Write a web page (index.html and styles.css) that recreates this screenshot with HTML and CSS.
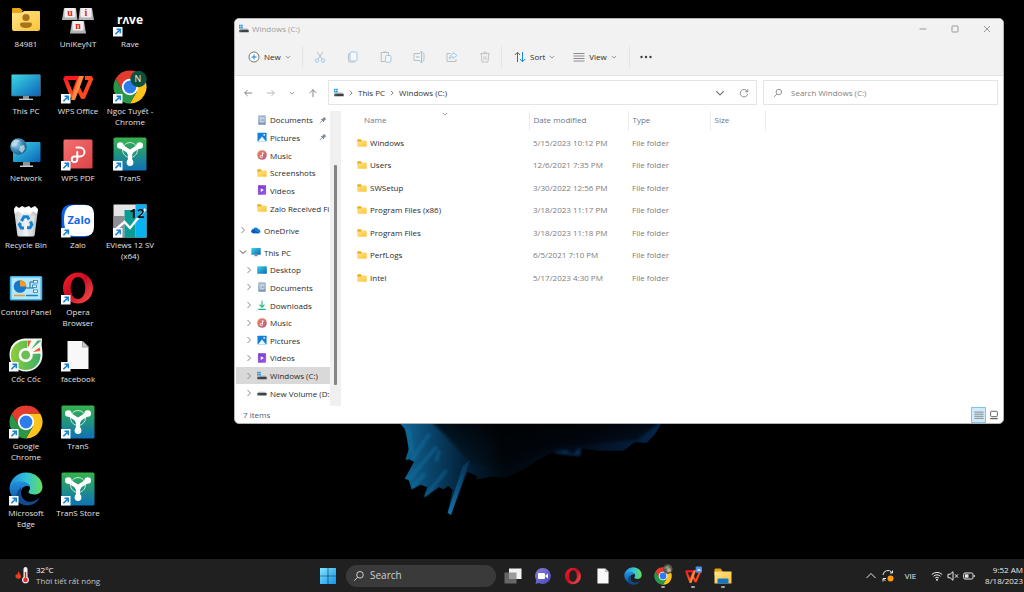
FILE: index.html
```html
<!DOCTYPE html>
<html lang="en">
<head>
<meta charset="utf-8">
<meta name="viewport" content="width=device-width, initial-scale=1">
<title>Desktop</title>
<link rel="stylesheet" href="styles.css">
</head>
<body>
<svg class="sprite" aria-hidden="true">
  <defs>
    <linearGradient id="gFolder" x1="0" y1="0" x2="1" y2="1"><stop offset="0" stop-color="#ffe38e"/><stop offset="1" stop-color="#fcc435"/></linearGradient>
    <linearGradient id="gScreen" x1="0" y1="0" x2="1" y2="1"><stop offset="0" stop-color="#3bd8e6"/><stop offset="1" stop-color="#0b62b8"/></linearGradient>
    <linearGradient id="gWps" x1="0" y1="0" x2="0" y2="1"><stop offset="0" stop-color="#fb1722"/><stop offset="1" stop-color="#ff5a1c"/></linearGradient>
    <linearGradient id="gPdf" x1="0" y1="0" x2="1" y2="1"><stop offset="0" stop-color="#f4706f"/><stop offset="1" stop-color="#dd4247"/></linearGradient>
    <linearGradient id="gTrans" x1="0" y1="0" x2="0" y2="1"><stop offset="0" stop-color="#36b34a"/><stop offset="1" stop-color="#0e71b8"/></linearGradient>
    <linearGradient id="gOpera" x1="0" y1="0" x2="1" y2="1"><stop offset="0" stop-color="#fb1f2c"/><stop offset=".45" stop-color="#c80d20"/><stop offset="1" stop-color="#ff5552"/></linearGradient>
    <linearGradient id="gEdgeA" x1="0" y1="0" x2="1" y2="0"><stop offset="0" stop-color="#1f8fdb"/><stop offset=".5" stop-color="#30c2dd"/><stop offset="1" stop-color="#66dd58"/></linearGradient>
    <linearGradient id="gEdgeB" x1="0" y1="0" x2="0" y2="1"><stop offset="0" stop-color="#2391df"/><stop offset="1" stop-color="#0c4f9c"/></linearGradient>
    <linearGradient id="gCoc" x1="0" y1="0" x2="1" y2="0"><stop offset="0" stop-color="#8fce3b"/><stop offset="1" stop-color="#3caf68"/></linearGradient>
    <linearGradient id="gMusic" x1="0" y1="0" x2="1" y2="1"><stop offset="0" stop-color="#f28a54"/><stop offset="1" stop-color="#b4578f"/></linearGradient>
    <linearGradient id="gVideo" x1="0" y1="0" x2="1" y2="1"><stop offset="0" stop-color="#6d34c5"/><stop offset="1" stop-color="#a35cf0"/></linearGradient>
    <linearGradient id="gDoc" x1="0" y1="0" x2="0" y2="1"><stop offset="0" stop-color="#a8bcd3"/><stop offset="1" stop-color="#7390b3"/></linearGradient>
    <linearGradient id="gStart" x1="0" y1="0" x2="1" y2="1"><stop offset="0" stop-color="#7ee6ff"/><stop offset="1" stop-color="#1292ec"/></linearGradient>
    <linearGradient id="gChat" x1="0" y1="0" x2="1" y2="1"><stop offset="0" stop-color="#8a7fdc"/><stop offset="1" stop-color="#4548b8"/></linearGradient>
    <linearGradient id="gBin" x1="0" y1="0" x2="1" y2="0"><stop offset="0" stop-color="#c5cbd0"/><stop offset=".5" stop-color="#f2f4f5"/><stop offset="1" stop-color="#b4babf"/></linearGradient>
    <radialGradient id="gGlobe" cx=".35" cy=".35" r=".8"><stop offset="0" stop-color="#a9d9ee"/><stop offset=".5" stop-color="#3e88b4"/><stop offset="1" stop-color="#174c72"/></radialGradient>
  </defs>

  <symbol id="shortcut" viewBox="0 0 34 34"><rect y="24" width="9.5" height="9.5" fill="#f8fbfd"/><path d="M2.4 31.2 7 26.6M3.5 26.3h3.8v3.9" fill="none" stroke="#1b80cf" stroke-width="1.5"/></symbol>

  <symbol id="user-folder" viewBox="0 0 34 34"><path d="M3 6q0-1 1-1h7l3 3h-1v5H3z" fill="#e8a513"/><path d="M3 10h9l3-2h15q1 0 1 1v17q0 2-2 2H5q-2 0-2-2z" fill="url(#gFolder)"/><circle cx="17" cy="14.5" r="3.6" fill="#a8741a"/><path d="M11 21q0-1.500 2-1.500h8q2 0 2 1.500 0 4-6 4t-6-4z" fill="#a8741a"/></symbol>

  <symbol id="unikey" viewBox="0 0 34 34"><g fill="#b3b3b3"><path d="M3 5h12l1.500 12H1z"/><path d="M19 5h12l2 12H17.500z"/><path d="M11 18h12l2 12.500H9z"/></g><g fill="#f0f0f0"><rect x="3.500" y="5" width="11" height="9.500" rx="1.500"/><rect x="19.500" y="5" width="11" height="9.500" rx="1.500"/><rect x="11.500" y="18" width="11" height="9.500" rx="1.500"/></g></symbol>

  <symbol id="this-pc" viewBox="0 0 34 34"><rect x="2.500" y="4.500" width="29" height="21.500" rx="1" fill="url(#gScreen)" stroke="#555f66" stroke-width=".7"/><path d="M14 26h6v3h-6z" fill="#8a949c"/><path d="M10 28.700h14v1.300H10z" fill="#c3cad0"/></symbol>

  <symbol id="network" viewBox="0 0 34 34"><rect x="4" y="5" width="27.500" height="20" rx="1" fill="url(#gScreen)"/><path d="M14 25h7v4h-7z" fill="#8a949c"/><path d="M11 28.500h13V30H11z" fill="#c3cad0"/><circle cx="9.500" cy="9.500" r="8.300" fill="url(#gGlobe)"/><path d="M5 3q4-1 6 1l-3 2-1 3-4 1-1-3zM11 9l4-1 1 4-3 4-3-3z" fill="#c5e3ee" opacity=".75"/></symbol>

  <symbol id="wps" viewBox="0 0 34 34"><path d="M4 8h14L11.500 27z" fill="none" stroke="url(#gWps)" stroke-width="4" stroke-linejoin="bevel"/><path d="M16 16 22 28 30.500 8H24" fill="none" stroke="#ff471b" stroke-width="4" stroke-linejoin="bevel"/><path d="M18 6h5L14 30h-4z" fill="#ff8a3d"/></symbol>

  <symbol id="wps-pdf" viewBox="0 0 34 34"><rect x="2.500" y="2.500" width="29" height="29" rx="1.500" fill="url(#gPdf)"/><path d="M15.500 10.500h3.500a4.500 4.500 0 0 1 0 9h-5.500a2.800 2.800 0 1 0 2.800 2.800V15" fill="none" stroke="#fff" stroke-width="1.900" stroke-linecap="round"/></symbol>

  <symbol id="chrome" viewBox="0 0 34 34"><path d="M17 .5A16.500 16.500 0 0 0 2.700 8.700L10 21.200 17 8.800h14.300A16.500 16.500 0 0 0 17 .5z" fill="#e33b2e"/><path d="M31.300 8.800H17l7 12.400-7.100 12.300A16.500 16.500 0 0 0 31.300 8.800z" fill="#fdc31b"/><path d="M2.700 8.700a16.500 16.500 0 0 0 14.200 24.800L24 21.200H10z" fill="#2a9748"/><circle cx="17" cy="17" r="8.200" fill="#fff"/><circle cx="17" cy="17" r="6.400" fill="#2e7cec"/></symbol>

  <symbol id="trans" viewBox="0 0 34 34"><rect x=".5" y=".5" width="33" height="33" rx="1.500" fill="url(#gTrans)"/><circle cx="17" cy="13" r="7.500" fill="none" stroke="#d3ecdc" stroke-width=".9"/><path d="M7.500 9 17 15l9.500-6M17 14v11" fill="none" stroke="#fff" stroke-width="4.200"/><path d="m11 10 6 12 6-12-6 4z" fill="#fff"/><g fill="#fff"><circle cx="7.300" cy="8.500" r="3.300"/><circle cx="26.700" cy="8.500" r="3.300"/><circle cx="17" cy="25.500" r="3.400"/></g></symbol>

  <symbol id="bin" viewBox="0 0 34 34"><path d="M5 5h24l-3.300 26q-.2 1.500-2 1.500H10.300q-1.800 0-2-1.500z" fill="url(#gBin)"/><path d="M5 5 7 2l3 2 3-2 3 1.500L20 2l2 2 4-2 3 3-1 5-4-3-3 3-4-2-4 2-4-3-3 3z" fill="#fff"/><path d="m8 11 5 4-3 4zm18 0-6 3 5 4zM9 23l5 5-4 2zm15-1-5 6 4 2z" fill="#dce1e4"/><g fill="none" stroke="#1583d3" stroke-width="3"><path d="M12.500 17 15 12.800h3.500l1.500 2.700"/><path d="m21.500 17.500 1.300 3.200-1.800 3h-3"/><path d="M15 24h-2.800l-1.800-3.300 1.300-1.700"/></g></symbol>

  <symbol id="zalo" viewBox="0 0 34 34"><rect x=".5" y=".5" width="32" height="32.500" rx="9" fill="#0a62f0"/><path d="M14 1h10q9 0 9 9v13q0 9-9 9H13q-4 0-6-2Q3 25 3 16 3 1 14 1z" fill="#fff"/></symbol>

  <symbol id="eviews" viewBox="0 0 34 34"><rect x=".5" y=".5" width="33" height="33" fill="#e6e6e6"/><path d="M.5 12h11v21.500H.5z" fill="#8f8e94"/><path d="M11.500 6h11v27.500h-11z" fill="#0b9c98"/><path d="M22.500.5h11v33h-11z" fill="#08b1ef"/><path d="m1 27 10.500-9 5.500 6L32.500 5" fill="none" stroke="#fff" stroke-width="2.400"/></symbol>

  <symbol id="control" viewBox="0 0 34 34"><rect x=".8" y="5" width="32.500" height="24.500" rx="1.500" fill="#3fb2e8"/><rect x="2.500" y="6.500" width="29" height="21.500" fill="#b5e6fa"/><circle cx="11" cy="15.500" r="6.300" fill="#1577c9"/><path d="M11 9.200a6.300 6.300 0 0 1 6.300 6.300H11z" fill="#f79b1e"/><path d="M17 17h4v-6h4M21 17h4" fill="none" stroke="#27698f"/><g fill="#fff" stroke="#1b81be" stroke-width=".8"><rect x="24.500" y="9.500" width="4" height="2.500"/><rect x="23.500" y="14" width="4" height="2.500"/><rect x="24.500" y="19" width="4" height="2.500"/></g><path d="M5 24.500h11" stroke="#e39b2a" stroke-width="1.500"/><path d="M17 24.500h12" stroke="#1b81be" stroke-width="1.500"/></symbol>

  <symbol id="opera" viewBox="0 0 34 34"><path fill-rule="evenodd" d="M17 1.500c8.500 0 15 7 15 15.500s-6.500 15.500-15 15.500S2 25.500 2 17 8.500 1.500 17 1.500zm0 4.500c-4.500 0-7.300 5-7.300 11s2.800 11 7.300 11 7.300-5 7.300-11S21.500 6 17 6z" fill="url(#gOpera)"/></symbol>

  <symbol id="coccoc" viewBox="0 0 34 34"><path d="M15 .5h18q-1 5-.5 7 1 4 1 9.500c0 9-7.500 16.500-16.500 16.500S.5 26 .5 17 6 1.500 15 .5z" fill="#f5faf2"/><circle cx="16.700" cy="17.300" r="14.800" fill="url(#gCoc)"/><path d="M18 12 19 1h14q-1 5-.5 14.500L22 16z" fill="#f5faf2"/><path d="m19 9.500 0-7 3.300.3z" fill="#ef5b34"/><path d="m22 11.500 6.500-9h4z" fill="#43ae5f"/><path d="m24 14 6.500-4.500 1 3.500z" fill="#ef5b34"/><circle cx="16.700" cy="17" r="5.800" fill="#6dbf55" stroke="#fff" stroke-width="2.600"/></symbol>

  <symbol id="page" viewBox="0 0 34 34"><path d="M6.500 3h15l6 6v22h-21z" fill="#f8f8f8"/><path d="M21.500 3v6h6z" fill="#cfcfcf" stroke="#777" stroke-width=".6"/></symbol>

  <symbol id="edge" viewBox="0 0 34 34"><path d="M.6 17A16.500 16.500 0 0 1 17 .5c10 0 16.500 7 16.500 14.500 0 5-4 7.500-8 7.500-4 0-6-1.200-6-2.500 0-1 1.500-1.500 1.500-4 0-3-3-5.500-7-5.500C7 10.500 2 13 .6 17z" fill="url(#gEdgeA)"/><path d="M.5 17c.5-5 6-8.500 12-7.500 5 .8 7.500 3 8 5-4-2-9 1-8.500 7 .5 6 6 10 12 9A16.500 16.500 0 0 1 .5 17z" fill="url(#gEdgeB)"/><path d="M12 20c-1 6 4 11 11 9.500 4-.7 6-2.500 8-4.500-2 5-7.500 8.500-13.500 8.500C10 33 7 28 7.500 23q.5-5 5.500-8-1 2-1 5z" fill="#114a8b"/></symbol>

  <symbol id="folder" viewBox="0 0 16 16"><path d="M.5 3q0-1 1-1h4.300L7.500 4v4h-7z" fill="#eba91a"/><path d="M.5 5.500h5.800L8 4h6.500q1 0 1 1v8q0 1-1 1h-13q-1 0-1-1z" fill="url(#gFolder)"/></symbol>
  <symbol id="document" viewBox="0 0 16 16"><rect x="2" y=".5" width="12" height="15" rx="1" fill="url(#gDoc)"/><path d="M4 5h8M4 8h4M4 11h8M10 8h2" stroke="#fff" stroke-width="1.300"/></symbol>
  <symbol id="picture" viewBox="0 0 16 16"><rect x=".8" y="1" width="14.500" height="14" rx="1" fill="#1381d8"/><path d="m1.500 15 6.500-8 6.500 8z" fill="#eef8ff"/><circle cx="11.500" cy="4.500" r="1.400" fill="#fff"/></symbol>
  <symbol id="music" viewBox="0 0 16 16"><circle cx="8" cy="8" r="7.700" fill="url(#gMusic)"/><circle cx="7" cy="10.300" r="1.800" fill="none" stroke="#fff" stroke-width="1.300"/><path d="M8.800 10V4l2.200 1.500" fill="none" stroke="#fff" stroke-width="1.300"/></symbol>
  <symbol id="video" viewBox="0 0 16 16"><rect x="1.500" y=".5" width="13" height="15" rx="1" fill="url(#gVideo)"/><path d="m6 5 5 3-5 3z" fill="#fff"/><path d="M3 2v12" stroke="#c9a6f5" stroke-dasharray="1.500 1.500"/></symbol>
  <symbol id="cloud" viewBox="0 0 16 16"><path d="M3.500 13a3.500 3.500 0 0 1 0-6.800A5 5 0 0 1 12 6.800 3.200 3.200 0 0 1 13 13z" fill="#1080d8"/><path d="M0 10q2-3.500 5-3l8 6H3.500Q1 13 0 10z" fill="#0a5bb5"/></symbol>
  <symbol id="mini-pc" viewBox="0 0 16 16"><rect x=".5" y="1.500" width="15" height="11" rx=".8" fill="url(#gScreen)"/><path d="M5 14h6" stroke="#69747c" stroke-width="1.300"/><path d="M7 12h2v2H7z" fill="#69747c"/></symbol>
  <symbol id="desktop-icon" viewBox="0 0 16 16"><rect x=".3" y="2" width="15.400" height="12" rx="1" fill="url(#gScreen)"/></symbol>
  <symbol id="download" viewBox="0 0 16 16"><path d="M8 1v10M4 7.500l4 4 4-4M2 15h12" fill="none" stroke="#1fae8d" stroke-width="1.700"/></symbol>
  <symbol id="drive" viewBox="0 0 16 16"><path d="M2.500 6h11l1.500 2H1z" fill="#b5b9bb"/><rect x=".5" y="8" width="15" height="4" rx=".7" fill="#3c4246"/><path d="M2 10h2" stroke="#68b65a"/></symbol>
  <symbol id="drive-c" viewBox="0 0 16 16"><path d="M2.500 7h11L15 9H1z" fill="#b5b9bb"/><rect x=".5" y="9" width="15" height="4.300" rx=".7" fill="#3c4246"/><path d="M2 11h2" stroke="#68b65a"/><path d="M0 1h2.700v2.700H0zm3.300 0H6v2.700H3.300zM0 4.300h2.700V7H0zm3.300 0H6V7H3.300z" fill="#2097e4"/></symbol>

  <symbol id="right" viewBox="0 0 8 8"><path d="m2.500 1 3 3-3 3" class="line"/></symbol>
  <symbol id="down" viewBox="0 0 8 8"><path d="m1 2.500 3 3 3-3" class="line"/></symbol>
  <symbol id="up" viewBox="0 0 12 12"><path d="m1.500 8 4.500-4.500L10.500 8" class="line"/></symbol>
  <symbol id="arrow-left" viewBox="0 0 12 12"><path d="M11 6H2m3.500-3.500L2 6l3.500 3.500" class="line"/></symbol>
  <symbol id="arrow-right" viewBox="0 0 12 12"><path d="M1 6h9M6.500 2.500 10 6 6.500 9.500" class="line"/></symbol>
  <symbol id="arrow-up" viewBox="0 0 12 12"><path d="M6 11V2M2 6l4-4 4 4" class="line"/></symbol>
  <symbol id="refresh" viewBox="0 0 12 12"><path d="M10.200 4.500A4.500 4.500 0 1 0 10.500 7M10.500 1.500v3h-3" class="line"/></symbol>
  <symbol id="search" viewBox="0 0 12 12"><circle cx="7" cy="4.800" r="3.300" class="line"/><path d="M4.600 7.300 1.300 10.700" class="line"/></symbol>
  <symbol id="pin" viewBox="0 0 10 10"><path d="m6 .8 3.200 3.200-1 .3-1.800 1.900-.3 2L2 4.200l2-.3L5.800 2z" fill="#7f8b97"/><path d="M4 6 1 9" stroke="#7f8b97"/></symbol>

  <symbol id="new" viewBox="0 0 12 12"><circle cx="6" cy="6" r="5" fill="#fff" stroke="#656565" stroke-width=".9"/><path d="M6 3.500v5M3.500 6h5" stroke="#1780d2"/></symbol>
  <symbol id="cut" viewBox="0 0 12 12"><path d="M3 .8 8 8M9 .8 4 8" fill="none" stroke="#b8b8b8" stroke-width=".9"/><g fill="none" stroke="#9cc9ea"><circle cx="3" cy="9.500" r="1.700"/><circle cx="9" cy="9.500" r="1.700"/></g></symbol>
  <symbol id="copy" viewBox="0 0 12 12"><path d="M3 3H1.500v6.500q0 1.500 1.500 1.500h5" fill="none" stroke="#bdbdbd"/><rect x="3" y="1" width="7" height="9" rx="1.200" fill="#f7f7f7" stroke="#9ccbed"/></symbol>
  <symbol id="paste" viewBox="0 0 12 12"><path d="M5 10.500H1.200v-9H8.500V4M3.500 1h3" fill="none" stroke="#bdbdbd"/><rect x="5.500" y="4.500" width="5.500" height="6.700" rx="1" fill="#f7f7f7" stroke="#9ccbed"/></symbol>
  <symbol id="rename" viewBox="0 0 12 12"><path d="M7 2.500H1v7h6M10 2.500h1v7h-1" fill="none" stroke="#bdbdbd"/><path d="M3 6h3.500M8.500 1v10M7 1h3M7 11h3" fill="none" stroke="#8bc2ea"/></symbol>
  <symbol id="share" viewBox="0 0 12 12"><path d="M4.500 2.500H1v8h9V8" fill="none" stroke="#bdbdbd"/><path d="M7 1.500 11 4.500 7 7.300V5.700Q4.700 5.500 3.500 8q0-4.500 3.500-5z" fill="#eef6fc" stroke="#8bc2ea" stroke-width=".8"/></symbol>
  <symbol id="trash" viewBox="0 0 12 12"><path d="M1 2.700h10M4.200 2.500Q4.500 1 6 1t1.800 1.500M2.300 3l.7 8h6l.7-8M5 5.300v3.500M7 5.300v3.500" fill="none" stroke="#bdbdbd" stroke-width=".9"/></symbol>
  <symbol id="sort" viewBox="0 0 12 12"><path d="M3.500 11V1.500M.8 4 3.500 1.300 6 4" fill="none" stroke="#606060"/><path d="M8.500 1v9.500M6 8l2.500 2.700L11.200 8" fill="none" stroke="#1a84d6"/></symbol>
  <symbol id="lines" viewBox="0 0 12 12"><path d="M.5 2.500h11M.5 5h11M.5 7.500h11M.5 10h11" fill="none" stroke="#8b8b8b" stroke-width="1.200"/></symbol>
  <symbol id="more" viewBox="0 0 12 12"><g fill="#3d3d3d"><circle cx="1.500" cy="6" r="1.200"/><circle cx="6" cy="6" r="1.200"/><circle cx="10.500" cy="6" r="1.200"/></g></symbol>
  <symbol id="minimize" viewBox="0 0 8 8"><path d="M.5 4h7" class="line"/></symbol>
  <symbol id="maximize" viewBox="0 0 8 8"><rect x="1" y="1" width="6" height="6" rx=".5" class="line"/></symbol>
  <symbol id="close" viewBox="0 0 8 8"><path d="m1 1 6 6M7 1 1 7" class="line"/></symbol>
  <symbol id="thumbs" viewBox="0 0 12 12"><rect x="2" y="1.500" width="8" height="6.500" rx="1" fill="none" stroke="#646464" stroke-width="1.200"/><path d="M1.500 10.200h9" stroke="#646464" stroke-width="1.500"/></symbol>

  <symbol id="weather" viewBox="0 0 16 18"><path d="M9.500 3a2 2 0 0 1 4 0v8a3.500 3.500 0 1 1-4 0z" fill="#f1f1f1"/><path d="M11.500 6v8" stroke="#e02b2b" stroke-width="1.500"/><circle cx="11.500" cy="14" r="2.300" fill="#e02b2b"/><path d="M4.500 5q.5 2 2 3.500 1.300 2-.5 4-3.500 1-4.500-1.500Q1 9 2.500 8q.3 1 1 1Q3.500 7 4.500 5z" fill="#e8401c"/></symbol>
  <symbol id="start" viewBox="0 0 16 16"><path d="M0 0h7.700v7.700H0zm8.300 0H16v7.700H8.300zM0 8.300h7.700V16H0zm8.300 0H16V16H8.300z" fill="url(#gStart)"/></symbol>
  <symbol id="taskview" viewBox="0 0 18 18"><rect x="5" y="1.500" width="12.500" height="10.500" fill="#f2f2f2"/><rect x=".5" y="5.500" width="12" height="11" fill="#7e7e7e" opacity=".75"/></symbol>
  <symbol id="chat" viewBox="0 0 18 18"><path d="M9 1a8 8 0 1 1-4 15l-3.500 1 .8-3.700A8 8 0 0 1 9 1z" fill="url(#gChat)"/><rect x="4" y="6" width="7" height="6" rx="1" fill="#fff"/><path d="m11.500 8.500 2.500-2v5l-2.500-2z" fill="#fff"/></symbol>
  <symbol id="photo-badge" viewBox="0 0 34 34"><circle cx="26" cy="4" r="9" fill="#57594a"/><circle cx="28" cy="6" r="4" fill="#b9a68d"/><path d="M19 3q4-7 11-4l-3 5z" fill="#8b937e"/></symbol>
  <symbol id="cloud-badge" viewBox="0 0 34 34"><rect x="22" y="-1" width="12" height="12" rx="2" fill="#4a8fe9"/><path d="M24 7h8l-2-3h-3z" fill="#e1efff"/></symbol>
  <symbol id="explorer" viewBox="0 0 18 18"><path d="M.5 2.500q0-1 1-1h5L8.500 4v4h-8z" fill="#e3a113"/><path d="M.5 4.500h17v12H.5z" fill="url(#gFolder)"/><path d="M3.500 12.500q0-1 1-1h9q1 0 1 1v4h-11z" fill="#1376c6"/></symbol>
  <symbol id="sync" viewBox="0 0 12 12"><path d="M1 5a5 5 0 0 1 9-2.500M10.500.5V3H8M1 11.500V8.500h3M1.500 9l2 2" class="line"/><circle cx="8.500" cy="8.500" r="3" fill="#ff9b0b"/></symbol>
  <symbol id="wifi" viewBox="0 0 12 12"><path d="M.8 4.500a7.500 7.500 0 0 1 10.400 0M2.500 6.300a5 5 0 0 1 7 0M4.200 8a2.600 2.600 0 0 1 3.600 0" class="line"/><circle cx="6" cy="9.700" r="1" fill="currentColor"/></symbol>
  <symbol id="mute" viewBox="0 0 12 12"><path d="M1 4.300h2L6 1.700v8.600L3 7.700H1zM8 4.300l3 3.400M11 4.300 8 7.700" class="line"/></symbol>
  <symbol id="battery" viewBox="0 0 12 12"><rect x=".7" y="3" width="9.300" height="6" rx="1.200" class="line"/><path d="M2 4.300h3.500v3.400H2z" fill="currentColor"/><path d="M11.300 5v2" class="line"/></symbol>
</svg>

<main class="desktop">
  <svg class="wallpaper" viewBox="0 0 900 360" aria-hidden="true">
    <defs>
      <linearGradient id="petal" x1="50" y1="0" x2="850" y2="0" gradientUnits="userSpaceOnUse"><stop offset="0" stop-color="#126e9f"/><stop offset=".12" stop-color="#0a466d"/><stop offset=".25" stop-color="#03223a"/><stop offset=".4" stop-color="#01080f"/><stop offset=".7" stop-color="#020c1b"/><stop offset="1" stop-color="#06264d"/></linearGradient>
      <linearGradient id="shade" x1="0" y1="40" x2="0" y2="210" gradientUnits="userSpaceOnUse"><stop offset="0" stop-color="#000" stop-opacity=".75"/><stop offset="1" stop-color="#000" stop-opacity="0"/></linearGradient>
      <linearGradient id="spike" x1="260" y1="150" x2="205" y2="315" gradientUnits="userSpaceOnUse"><stop offset="0" stop-color="#05304f"/><stop offset="1" stop-color="#1273a8"/></linearGradient>
      <filter id="soft"><feGaussianBlur stdDeviation="4"/></filter>
    </defs>
    <path d="M50 30 850 30 825 72 800 99 765 96 730 122 660 122 608 116 602 140 550 136 512 128 440 172 380 204 340 200 292 208 288 196 262 186 213 315 203 308 218 240 205 228 190 238 178 232 132 262 142 232 122 224 95 238 86 210 74 206 102 156 88 148 76 150 86 118 80 80 74 56z" fill="url(#petal)"/>
    <path d="M150 30H850L770 90 530 110 370 180 270 160 200 80z" fill="url(#shade)" filter="url(#soft)"/>
    <path d="m270 150-57 165-10-7 45-140z" fill="url(#spike)"/>
    <g fill="none" stroke="#1479ab" stroke-width="8" opacity=".55" filter="url(#soft)"><path d="M85 210 170 110M135 260 200 180M95 150 150 70M95 235 135 190"/><path d="M168 155 178 122M86 55 96 130"/></g>
    <path d="m520 128 35-8 25 12 20-20v25z" fill="#0c467b" opacity=".6" filter="url(#soft)"/>
  </svg>

  <ul class="shortcuts">
    <li><button class="shortcut"><svg><use href="#user-folder"/></svg><span>84981</span></button></li>
    <li><button class="shortcut"><svg><use href="#this-pc"/></svg><span>This PC</span></button></li>
    <li><button class="shortcut"><svg><use href="#network"/></svg><span>Network</span></button></li>
    <li><button class="shortcut"><svg><use href="#bin"/></svg><span>Recycle Bin</span></button></li>
    <li><button class="shortcut"><svg><use href="#control"/></svg><span>Control Panel</span></button></li>
    <li><button class="shortcut"><svg><use href="#coccoc"/><use href="#shortcut"/></svg><span>Cốc Cốc</span></button></li>
    <li><button class="shortcut"><svg><use href="#chrome"/><use href="#shortcut"/></svg><span>Google<br>Chrome</span></button></li>
    <li><button class="shortcut"><svg><use href="#edge"/><use href="#shortcut"/></svg><span>Microsoft<br>Edge</span></button></li>
    <li><button class="shortcut"><svg><use href="#unikey"/><g class="key-letter"><text x="9" y="13">u</text><text x="25" y="13">i</text><text x="17" y="26">n</text></g></svg><span>UniKeyNT</span></button></li>
    <li><button class="shortcut"><svg><use href="#wps"/><use href="#shortcut"/></svg><span>WPS Office</span></button></li>
    <li><button class="shortcut"><svg><use href="#wps-pdf"/><use href="#shortcut"/></svg><span>WPS PDF</span></button></li>
    <li><button class="shortcut"><svg><use href="#zalo"/><use href="#shortcut"/><text class="zalo-word" x="18" y="20">Zalo</text></svg><span>Zalo</span></button></li>
    <li><button class="shortcut"><svg><use href="#opera"/><use href="#shortcut"/></svg><span>Opera<br>Browser</span></button></li>
    <li><button class="shortcut"><svg><use href="#page"/><use href="#shortcut"/></svg><span>facebook</span></button></li>
    <li><button class="shortcut"><svg><use href="#trans"/><use href="#shortcut"/></svg><span>TranS</span></button></li>
    <li><button class="shortcut"><svg><use href="#trans"/><use href="#shortcut"/></svg><span>TranS Store</span></button></li>
    <li><button class="shortcut"><svg><use href="#shortcut"/><text class="rave-word" x="17" y="21">rʌve</text></svg><span>Rave</span></button></li>
    <li><button class="shortcut"><svg><use href="#chrome"/><use href="#shortcut"/><circle cx="25.500" cy="9" r="8.200" fill="#0b5040"/><text class="profile-letter" x="25" y="12">N</text></svg><span>Ngọc Tuyết -<br>Chrome</span></button></li>
    <li><button class="shortcut"><svg><use href="#trans"/><use href="#shortcut"/></svg><span>TranS</span></button></li>
    <li><button class="shortcut"><svg><use href="#eviews"/><use href="#shortcut"/><text class="eviews-number" x="24" y="14">12</text></svg><span>EViews 12 SV<br>(x64)</span></button></li>
  </ul>

  <section class="window" aria-label="Windows (C:)">
    <header class="titlebar">
      <svg class="icon"><use href="#drive-c"/></svg>
      <h1 class="window-title">Windows (C:)</h1>
      <div class="window-controls">
        <button aria-label="Minimize"><svg><use href="#minimize"/></svg></button>
        <button aria-label="Maximize"><svg><use href="#maximize"/></svg></button>
        <button aria-label="Close"><svg><use href="#close"/></svg></button>
      </div>
    </header>

    <div class="toolbar">
      <button class="menu-button new-button"><svg class="tool-icon"><use href="#new"/></svg>New<svg class="caret"><use href="#down"/></svg></button>
      <div class="tool-group">
        <button class="tool" aria-label="Cut"><svg class="tool-icon"><use href="#cut"/></svg></button>
        <button class="tool" aria-label="Copy"><svg class="tool-icon"><use href="#copy"/></svg></button>
        <button class="tool" aria-label="Paste"><svg class="tool-icon"><use href="#paste"/></svg></button>
        <button class="tool" aria-label="Rename"><svg class="tool-icon"><use href="#rename"/></svg></button>
        <button class="tool" aria-label="Share"><svg class="tool-icon"><use href="#share"/></svg></button>
        <button class="tool" aria-label="Delete"><svg class="tool-icon"><use href="#trash"/></svg></button>
      </div>
      <div class="menu-group">
        <button class="menu-button"><svg class="tool-icon"><use href="#sort"/></svg>Sort<svg class="caret"><use href="#down"/></svg></button>
        <button class="menu-button"><svg class="tool-icon"><use href="#lines"/></svg>View<svg class="caret"><use href="#down"/></svg></button>
      </div>
      <button class="tool" aria-label="See more"><svg class="tool-icon"><use href="#more"/></svg></button>
    </div>

    <div class="navigation">
      <div class="history">
        <button aria-label="Back"><svg class="nav-icon"><use href="#arrow-left"/></svg></button>
        <button class="faint" aria-label="Forward"><svg class="nav-icon"><use href="#arrow-right"/></svg></button>
        <button aria-label="Recent locations"><svg class="caret"><use href="#down"/></svg></button>
        <button aria-label="Up"><svg class="nav-icon"><use href="#arrow-up"/></svg></button>
      </div>
      <div class="address">
        <svg class="icon"><use href="#drive-c"/></svg>
        <svg class="crumb-arrow"><use href="#right"/></svg>
        <a href="#pc">This PC</a>
        <svg class="crumb-arrow"><use href="#right"/></svg>
        <a href="#c">Windows (C:)</a>
        <span class="address-actions">
          <button aria-label="Previous locations"><svg class="nav-icon"><use href="#down"/></svg></button>
          <button aria-label="Refresh"><svg class="nav-icon"><use href="#refresh"/></svg></button>
        </span>
      </div>
      <label class="search-files"><svg class="nav-icon"><use href="#search"/></svg><input type="text" placeholder="Search Windows (C:)" aria-label="Search Windows (C:)"></label>
    </div>

    <div class="panes">
      <nav class="tree">
        <ul class="branch quick">
          <li><a href="#d"><svg class="icon"><use href="#document"/></svg>Documents<svg class="pin"><use href="#pin"/></svg></a></li>
          <li><a href="#p"><svg class="icon"><use href="#picture"/></svg>Pictures<svg class="pin"><use href="#pin"/></svg></a></li>
          <li><a href="#m"><svg class="icon"><use href="#music"/></svg>Music</a></li>
          <li><a href="#s"><svg class="icon"><use href="#folder"/></svg>Screenshots</a></li>
          <li><a href="#v"><svg class="icon"><use href="#video"/></svg>Videos</a></li>
          <li><a href="#z"><svg class="icon"><use href="#folder"/></svg>Zalo Received Fi</a></li>
        </ul>
        <a class="root" href="#o"><svg class="twist"><use href="#right"/></svg><svg class="icon"><use href="#cloud"/></svg>OneDrive</a>
        <a class="root" href="#pc"><svg class="twist open"><use href="#down"/></svg><svg class="icon"><use href="#mini-pc"/></svg>This PC</a>
        <ul class="branch volumes">
          <li><a href="#dt"><svg class="twist"><use href="#right"/></svg><svg class="icon"><use href="#desktop-icon"/></svg>Desktop</a></li>
          <li><a href="#d"><svg class="twist"><use href="#right"/></svg><svg class="icon"><use href="#document"/></svg>Documents</a></li>
          <li><a href="#dl"><svg class="twist"><use href="#right"/></svg><svg class="icon"><use href="#download"/></svg>Downloads</a></li>
          <li><a href="#m"><svg class="twist"><use href="#right"/></svg><svg class="icon"><use href="#music"/></svg>Music</a></li>
          <li><a href="#p"><svg class="twist"><use href="#right"/></svg><svg class="icon"><use href="#picture"/></svg>Pictures</a></li>
          <li><a href="#v"><svg class="twist"><use href="#right"/></svg><svg class="icon"><use href="#video"/></svg>Videos</a></li>
          <li><a class="selected" href="#c"><svg class="twist"><use href="#right"/></svg><svg class="icon"><use href="#drive-c"/></svg>Windows (C:)</a></li>
          <li><a href="#n"><svg class="twist"><use href="#right"/></svg><svg class="icon"><use href="#drive"/></svg>New Volume (D:</a></li>
        </ul>
      </nav>
      <div class="scrollbar"><span class="thumb"></span></div>
      <div class="files">
        <table>
          <colgroup><col class="col-name"><col class="col-date"><col class="col-type"><col class="col-size"><col></colgroup>
          <thead><tr><th scope="col" class="sorted">Name<svg class="caret"><use href="#down"/></svg></th><th scope="col">Date modified</th><th scope="col">Type</th><th scope="col">Size</th><td></td></tr></thead>
          <tbody>
            <tr><td><svg class="icon"><use href="#folder"/></svg>Windows</td><td>5/15/2023 10:12 PM</td><td>File folder</td><td></td><td></td></tr>
            <tr><td><svg class="icon"><use href="#folder"/></svg>Users</td><td>12/6/2021 7:35 PM</td><td>File folder</td><td></td><td></td></tr>
            <tr><td><svg class="icon"><use href="#folder"/></svg>SWSetup</td><td>3/30/2022 12:56 PM</td><td>File folder</td><td></td><td></td></tr>
            <tr><td><svg class="icon"><use href="#folder"/></svg>Program Files (x86)</td><td>3/18/2023 11:17 PM</td><td>File folder</td><td></td><td></td></tr>
            <tr><td><svg class="icon"><use href="#folder"/></svg>Program Files</td><td>3/18/2023 11:18 PM</td><td>File folder</td><td></td><td></td></tr>
            <tr><td><svg class="icon"><use href="#folder"/></svg>PerfLogs</td><td>6/5/2021 7:10 PM</td><td>File folder</td><td></td><td></td></tr>
            <tr><td><svg class="icon"><use href="#folder"/></svg>Intel</td><td>5/17/2023 4:30 PM</td><td>File folder</td><td></td><td></td></tr>
          </tbody>
        </table>
      </div>
    </div>

    <footer class="status">
      <span>7 items</span>
      <div class="view-switch">
        <button class="active" aria-label="Details view"><svg class="nav-icon"><use href="#lines"/></svg></button>
        <button aria-label="Thumbnail view"><svg class="nav-icon"><use href="#thumbs"/></svg></button>
      </div>
    </footer>
  </section>
</main>

<footer class="taskbar">
  <button class="weather"><svg><use href="#weather"/></svg><span><span class="temperature">32°C</span><br>Thời tiết rất nóng</span></button>
  <div class="launcher">
    <button class="start" aria-label="Start"><svg><use href="#start"/></svg></button>
    <label class="taskbar-search"><svg class="search-icon"><use href="#search"/></svg><input type="text" placeholder="Search" aria-label="Search"></label>
    <div class="apps">
      <button aria-label="Task view"><svg><use href="#taskview"/></svg></button>
      <button aria-label="Chat"><svg><use href="#chat"/></svg></button>
      <button aria-label="Opera"><svg><use href="#opera"/></svg></button>
      <button aria-label="Document"><svg><use href="#page"/></svg></button>
      <button aria-label="Edge"><svg><use href="#edge"/></svg></button>
      <button class="running" aria-label="Chrome"><svg><use href="#chrome"/><use class="badge" href="#photo-badge"/></svg></button>
      <button class="running" aria-label="WPS"><svg><use href="#wps"/><use class="badge" href="#cloud-badge"/></svg></button>
      <button class="running" aria-label="File Explorer"><svg><use href="#explorer"/></svg></button>
    </div>
  </div>
  <div class="tray">
    <button aria-label="Hidden icons"><svg><use href="#up"/></svg></button>
    <button aria-label="Updates"><svg><use href="#sync"/></svg></button>
    <button class="language">VIE</button>
    <button class="quick-settings" aria-label="Network, volume, battery"><svg><use href="#wifi"/></svg><svg><use href="#mute"/></svg><svg><use href="#battery"/></svg></button>
    <button class="clock">9:52 AM<br>8/18/2023</button>
  </div>
</footer>
</body>
</html>
```
FILE: styles.css
```css
* { box-sizing: border-box; }

body {
  margin: 0;
  height: 100vh;
  display: flex;
  flex-direction: column;
  overflow: hidden;
  background: #000;
  color: #2b2b2b;
  font: 8px/11px "Open Sans", "Noto Sans", sans-serif;
}

button, input { font: inherit; color: inherit; border: 0; padding: 0; margin: 0; background: none; }
a { color: inherit; text-decoration: none; }
ul { list-style: none; margin: 0; padding: 0; }
svg { display: block; flex: none; overflow: visible; }
symbol { overflow: visible; }
.sprite { position: absolute; width: 0; height: 0; }
.line { fill: none; stroke: currentColor; stroke-width: 1; }
.icon { width: 10px; height: 10px; }
.nav-icon { width: 10px; height: 10px; }
.caret { width: 6px; height: 6px; color: #777; }

/* Desktop */
.desktop { position: relative; flex: 1; min-height: 0; }
.wallpaper { position: absolute; left: 380px; top: 410px; width: 300px; height: 120px; }
.shortcuts {
  display: grid;
  grid-auto-flow: column;
  grid-template-rows: repeat(8, 67px);
  grid-auto-columns: 52px;
}
.shortcut {
  width: 100%;
  padding-top: 3px;
  display: flex;
  flex-direction: column;
  align-items: center;
  gap: 1px;
  color: #e2e2e2;
  text-align: center;
  white-space: nowrap;
}
.shortcut svg { width: 34px; height: 34px; }
.key-letter { font: bold 10px "Liberation Serif", serif; fill: #e3222a; text-anchor: middle; }
.rave-word { font: bold 12px "Open Sans", sans-serif; fill: #fff; text-anchor: middle; }
.profile-letter { font: 9px "Open Sans", sans-serif; fill: #e6f2ee; text-anchor: middle; }
.zalo-word { font: bold 11px "Open Sans", sans-serif; fill: #1268ee; text-anchor: middle; }
.eviews-number { font: bold 13px "Open Sans", sans-serif; fill: #111; text-anchor: middle; }

/* Explorer window */
.window {
  position: absolute;
  left: 234px;
  right: 20px;
  top: 18px;
  height: 406px;
  display: flex;
  flex-direction: column;
  overflow: hidden;
  border-radius: 5px;
  background: #fff;
  border: 1px solid #b4b4b4;
}
.titlebar { height: 19px; padding-left: 4px; display: flex; align-items: center; gap: 3px; background: #f2f2f2; }
.window-title { flex: 1; margin: 0; font: inherit; color: #a0a0a0; }
.window-controls { display: flex; color: #999; }
.window-controls button { width: 32px; height: 19px; display: grid; place-items: center; }
.window-controls svg { width: 8px; height: 8px; }

.toolbar { height: 38px; padding-left: 13px; display: flex; align-items: center; background: #f2f2f2; border-bottom: 1px solid #e3e3e3; }
.tool-icon { width: 12px; height: 12px; }
.tool { width: 33px; height: 22px; display: grid; place-items: center; }
.tool-group, .menu-group { display: flex; height: 22px; border: solid #e4e4e4; border-width: 0 1px; }
.menu-button { display: flex; align-items: center; gap: 4px; }
.new-button { width: 54px; }
.menu-group { border-left: 0; padding: 0 12px; gap: 18px; }

.navigation { height: 35px; padding: 0 5px 2px 0; display: flex; align-items: center; gap: 6px; color: #555; }
.history { width: 87px; padding: 0 4px 0 8px; display: flex; align-items: center; justify-content: space-between; color: #707070; }
.history .faint { color: #ababab; }
.address, .search-files { height: 25px; border: 1px solid #e4e4e4; display: flex; align-items: center; }
.address { flex: 1; min-width: 0; gap: 4px; padding: 0 7px 0 5px; }
.address a { color: #333; }
.crumb-arrow { width: 6px; height: 6px; }
.address-actions { margin-left: auto; display: flex; gap: 14px; color: #777; }
.search-files { width: 235px; gap: 8px; padding-left: 9px; color: #808080; }
.search-files input { flex: 1; min-width: 0; outline: 0; }
input::placeholder { color: inherit; opacity: 1; }

.panes { flex: 1; min-height: 0; display: flex; }
.tree { width: 95px; padding: 0 0 0 1px; overflow: hidden; display: flex; flex-direction: column; gap: 4px; }
.branch { display: grid; grid-auto-rows: 1fr; }
.quick { height: 106px; }
.volumes { height: 141px; margin-top: -4px; }
.tree a { height: 18px; display: flex; align-items: center; gap: 3px; white-space: nowrap; }
.branch a { height: 100%; padding-left: 9px; }
.quick a { padding-left: 21px; }
.quick .pin { width: 8px; height: 8px; margin: 0 3px 0 auto; }
.root { padding-left: 3px; }
.twist { width: 8px; height: 8px; color: #888; margin-right: 1px; }
.twist.open { color: #444; }
.tree .selected { background: #d9d9d9; }
.scrollbar { width: 11px; background: #f0f0f0; padding: 54px 4px 0; }
.thumb { display: block; height: 220px; background: #858585; border-radius: 1px; }

.files { flex: 1; min-width: 0; }
.files table { width: 100%; table-layout: fixed; border-collapse: collapse; }
.col-name { width: 188px; }
.col-date { width: 99px; }
.col-type { width: 82px; }
.col-size { width: 55px; }
.files th, .files td { padding: 0 4px; text-align: left; color: #7c7c7c; white-space: nowrap; }
.files th { height: 20px; padding-bottom: 3px; font-weight: 400; color: #65788f; border-right: 1px solid #ececec; }
.files th:first-child { padding-left: 23px; }
.sorted { position: relative; }
.sorted .caret { position: absolute; left: 101px; top: 0; }
.files tbody tr { height: 22px; }
.files tbody tr:nth-child(even) { height: 23px; }
.files tbody td:first-child { padding-left: 16px; color: #2b2b2b; }
.files td .icon { display: inline-block; vertical-align: -2px; margin-right: 3px; }

.status { height: 17px; padding: 0 2px 0 8px; display: flex; align-items: center; justify-content: space-between; color: #48607c; }
.view-switch { display: flex; color: #555; }
.view-switch button { width: 15px; height: 16px; display: grid; place-items: center; }
.view-switch .active { background: #cfeafa; border: 1px solid #7fc4ea; }

/* Taskbar */
.taskbar { height: 33px; display: grid; grid-template-columns: 320px auto 1fr; align-items: center; background: #202020; color: #e8e8e8; }
.weather, .clock { padding-bottom: 2px; }
.weather { padding-left: 14px; display: flex; align-items: center; gap: 6px; text-align: left; color: #c4c4c4; }
.weather svg { width: 16px; height: 18px; }
.temperature { color: #fff; }
.launcher { display: flex; align-items: center; gap: 10px; }
.start svg { width: 16px; height: 16px; }
.taskbar-search { width: 150px; height: 22px; padding-left: 7px; display: flex; align-items: center; gap: 5px; border-radius: 11px; background: #3a3a3a; font-size: 10px; color: #cfcfcf; }
.search-icon { width: 12px; height: 12px; }
.taskbar-search input { flex: 1; min-width: 0; outline: 0; }
.apps { display: flex; margin-left: -8px; }
.apps button { position: relative; width: 30px; height: 33px; display: grid; place-items: center; }
.apps svg { width: 18px; height: 18px; }
.running::after { content: ""; position: absolute; left: 13px; bottom: 4px; width: 4px; height: 2px; border-radius: 1px; background: #a5a5a5; }
.tray { display: flex; align-items: center; justify-content: flex-end; gap: 5px; padding-right: 1px; }
.tray svg { width: 12px; height: 12px; }
.language { padding: 0 10px 0 6px; }
.quick-settings { display: flex; gap: 4px; }
.clock { padding-left: 5px; text-align: right; }
```
